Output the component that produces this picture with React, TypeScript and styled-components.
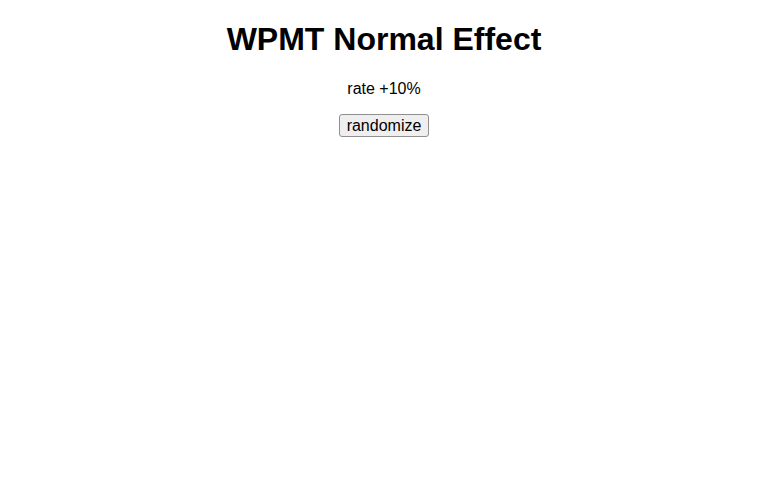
import React, { useState } from "react";
import styled, { createGlobalStyle } from "styled-components";

const GlobalStyle = createGlobalStyle`
  body {
    margin: 0;
    background: #ffffff;
    color: #000000;
    font-family: "Liberation Sans", Arial, sans-serif;
  }
`;

const Page = styled.div`
  display: flex;
  flex-direction: column;
  align-items: center;
`;

const Title = styled.h1`
  margin: 21px 0 0;
  font-size: 32px;
  font-weight: bold;
  line-height: 37px;
`;

const Rate = styled.div`
  margin-top: 22px;
  font-size: 16px;
  line-height: 18px;
`;

const Button = styled.button`
  margin-top: 16px;
  font-family: "Liberation Sans", Arial, sans-serif;
  font-size: 16px;
  line-height: 18px;
  padding: 2px 7px 1px;
  color: #000000;
  background: #efefef;
  border: 1px solid #8f8f8f;
  border-radius: 3px;
`;

const App: React.FC = () => {
  const [rate, setRate] = useState(10);

  const randomize = (): void => {
    setRate(Math.round(Math.random() * 40 - 20));
  };

  return (
    <Page>
      <GlobalStyle />
      <Title>WPMT Normal Effect</Title>
      <Rate>rate {rate >= 0 ? "+" : ""}{rate}%</Rate>
      <Button onClick={randomize}>randomize</Button>
    </Page>
  );
};

export default App;
